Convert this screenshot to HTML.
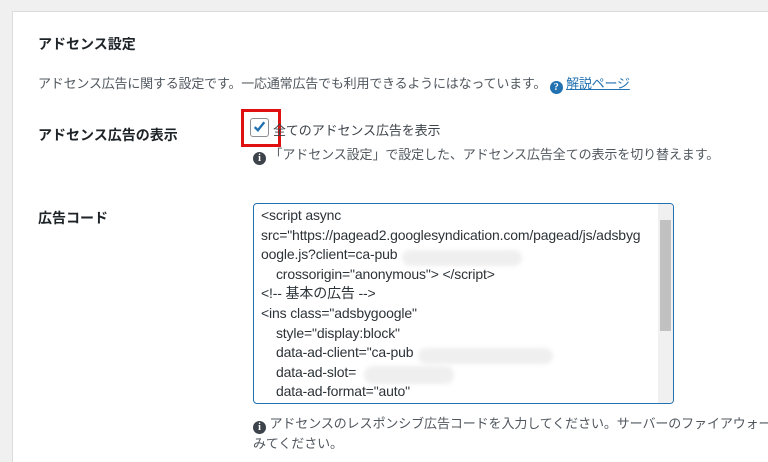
<!DOCTYPE html>
<html><head><meta charset="utf-8"><style>
html,body{margin:0;width:768px;height:462px;overflow:hidden}
body{background:#f0f0f1;font-family:"Liberation Sans","Noto Sans CJK JP",sans-serif;color:#3c434a;position:relative}
.panel{position:absolute;left:12px;top:11px;width:755px;height:450px;background:#fff;border:1px solid #dcdcde;border-right:none;border-bottom:none}
.a{position:absolute;white-space:nowrap}
.b{font-weight:bold;color:#1d2327;font-size:14px}
.s{font-size:13px;color:#50575e;letter-spacing:-0.1px}
.ic{display:inline-block;width:13px;height:13px;border-radius:50%;background:#3c434a;color:#fff;font-size:10px;line-height:13px;text-align:center;font-weight:bold;vertical-align:-2px;font-family:"Liberation Serif",serif}
.ta{position:absolute;left:253px;top:203px;width:419px;height:199px;border:1px solid #2271b1;border-radius:4px;background:#fff;overflow:hidden}
.ta .t{position:absolute;left:7px;top:2px;font-size:14px;line-height:19.6px;color:#2c3338;white-space:pre;letter-spacing:-0.15px}
.blur{position:absolute;background:#efefef;border-radius:10px;filter:blur(2px)}
</style></head><body>
<div class="panel"></div>
<div class="a b" style="left:38px;top:34px">アドセンス設定</div>
<div class="a s" style="left:38px;top:73px;letter-spacing:-0.2px">アドセンス広告に関する設定です。一応通常広告でも利用できるようにはなっています。 <span class="ic" style="background:#2271b1">?</span> <span style="color:#2271b1;text-decoration:underline">解説ページ</span></div>
<div class="a b" style="left:38px;top:125px">アドセンス広告の表示</div>
<div class="a" style="left:241px;top:109px;width:34px;height:32px;border:3px solid #e01010"></div>
<div class="a" style="left:250px;top:118px;width:17px;height:17px;border:1px solid #8c8f94;border-radius:3px;background:#fff"></div>
<svg class="a" style="left:251px;top:118px" width="17" height="17" viewBox="0 0 16 16"><path d="M3.5 8.5l3 3 6-7.5" fill="none" stroke="#2271b1" stroke-width="2.2"/></svg>
<div class="a s" style="left:273px;top:120px;color:#3c434a">全てのアドセンス広告を表示</div>
<div class="a s" style="left:253px;top:144px"><span class="ic">i</span> 「アドセンス設定」で設定した、アドセンス広告全ての表示を切り替えます。</div>
<div class="a b" style="left:38px;top:208px">広告コード</div>
<div class="ta">
<div class="t">&lt;script async
src="https://pagead2.googlesyndication.com/pagead/js/adsbyg
oogle.js?client=ca-pub
    crossorigin="anonymous"&gt; &lt;/script&gt;
&lt;!-- 基本の広告 --&gt;
&lt;ins class="adsbygoogle"
    style="display:block"
    data-ad-client="ca-pub
    data-ad-slot=
    data-ad-format="auto"</div>
<div class="blur" style="left:148px;top:46px;width:120px;height:16px"></div>
<div class="blur" style="left:164px;top:144px;width:135px;height:16px"></div>
<div class="blur" style="left:110px;top:162px;width:90px;height:18px"></div>
<div style="position:absolute;right:0;top:0;width:15px;height:199px;background:#f0f0f0"></div>
<div style="position:absolute;right:2px;top:16px;width:11px;height:111px;background:#c1c1c1"></div>
</div>
<div class="a s" style="left:253px;top:413px"><span class="ic">i</span> アドセンスのレスポンシブ広告コードを入力してください。サーバーのファイアウォール</div>
<div class="a s" style="left:253px;top:433px">みてください。</div>
</body></html>
